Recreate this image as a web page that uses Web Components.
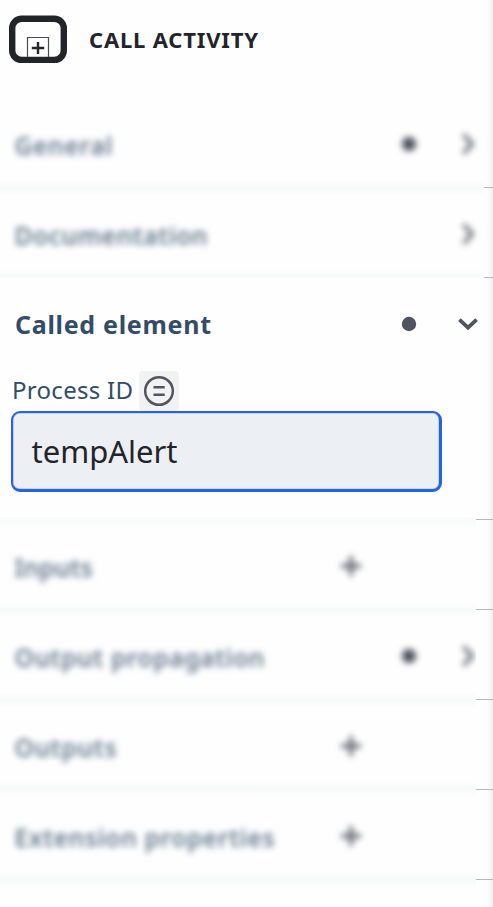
<!DOCTYPE html>
<html lang="en">
<head>
<meta charset="utf-8">
<title>Call activity</title>
<style>
body{margin:0;background:#fefefe;font-family:"Noto Sans","Open Sans",sans-serif;overflow:hidden}
</style>
</head>
<body>
<properties-panel></properties-panel>
<script>
const define = (name, html, setup) => customElements.define(name, class extends HTMLElement {
  connectedCallback() {
    if (this.shadowRoot) return;
    this.attachShadow({mode: 'open'}).innerHTML = html;
    if (setup) setup(this, this.shadowRoot);
  }
});

// Text spaced so that its line has the width given in the "width" attribute.
define('spaced-label', `<style>:host{display:block;white-space:nowrap;line-height:32px}span{display:inline-block}</style><span></span>`, (el, root) => {
  const span = root.querySelector('span');
  span.textContent = el.getAttribute('text');
  const gap = (Number(el.getAttribute('width')) - span.getBoundingClientRect().width) / (span.textContent.length - 1);
  span.style.letterSpacing = gap.toFixed(3) + 'px';
});

const shapes = {
  dot: '<circle cx="12" cy="12" r="7.2" fill="#50545f"/>',
  right: '<path d="M7.5 2.5 16 12 7.5 21.5" fill="none" stroke="#50545f" stroke-width="4"/>',
  down: '<path d="M3.4 7.7 12 15.7 20.6 7.7" fill="none" stroke="#50545f" stroke-width="3.8"/>',
  plus: '<path d="M12 2v20M2 12h20" fill="none" stroke="#50545f" stroke-width="3.8"/>'
};
define('panel-icon', `<style>:host{display:block;width:24px;height:24px}svg{display:block;overflow:visible}</style><svg width="24" height="24" viewBox="0 0 24 24"></svg>`, (el, root) => {
  root.querySelector('svg').innerHTML = shapes[el.getAttribute('kind')];
});

define('panel-header', `<style>
:host{display:flex;align-items:flex-start;height:98px;box-sizing:border-box;padding:15px 0 0 8px;gap:21px;color:#22242a}
svg{display:block}spaced-label{font-size:22px;font-weight:700;padding-top:8px}
</style>
<svg width="60" height="49" viewBox="0 0 60 49"><rect x="4.2" y="3.7" width="51.6" height="41.2" rx="9.5" fill="#fefefe" stroke="#22242a" stroke-width="6.4"/><path d="M19.5 42V22.5h21V42" fill="none" stroke="#4b4b52" stroke-width="1.2"/><path d="M30 27v12M23.8 33h12.4" stroke="#22242a" stroke-width="2.4"/></svg>
<spaced-label text="CALL ACTIVITY" width="169"></spaced-label>`);

define('collapsed-group', `<style>
:host{display:grid;grid-template-columns:var(--body,476px) 1fr;height:90px}
.body{overflow:hidden;background:linear-gradient(#f8f9f9,#fefefe) 0 0/100% 8px no-repeat,linear-gradient(#fefefe,#f8f9f9) 0 100%/100% 9px no-repeat}
:host([first]) .body{background:linear-gradient(#fefefe,#f8f9f9) 0 100%/100% 9px no-repeat}
.line{display:grid;grid-template-columns:324px 58px 59px 24px;padding:27px 0 0 14.5px;align-items:start;filter:blur(3px)}
.line>*{min-width:0}
spaced-label{font-size:24.5px;font-weight:600;color:#334d68;opacity:.75;padding-top:5px}
panel-icon{margin-top:7px}.add{opacity:.9}.arrow{opacity:.85}
.edge{border-bottom:1px solid #b8b6c1}
</style><div class="body"><div class="line"><spaced-label></spaced-label><div class="add"></div><div class="dot"></div><div class="arrow"></div></div></div><div class="edge"></div>`, (el, root) => {
  const label = document.createElement('spaced-label');
  label.setAttribute('text', el.getAttribute('label'));
  label.setAttribute('width', el.getAttribute('width'));
  root.querySelector('spaced-label').replaceWith(label);
  for (const [slot, kind] of [['add','plus'],['dot','dot'],['arrow','right']])
    if (el.hasAttribute(slot)) root.querySelector('.' + slot).innerHTML = `<panel-icon kind="${kind}"></panel-icon>`;
});

define('feel-button', `<style>:host{display:grid;place-items:center;width:40px;height:40px;border-radius:4px;background:#f1f2f4}svg{display:block}</style>
<svg width="32" height="32" viewBox="0 0 32 32" fill="none" stroke="#50545f"><circle cx="16" cy="16" r="13.8" stroke-width="2.5"/><path d="M10.5 12.2h11.2M10.5 19.8h11.2" stroke-width="2.4"/></svg>`);

define('text-field', `<style>
:host{display:block;width:431px;height:81px;box-sizing:border-box;border:solid #2563e5;border-width:2px 3px 3px 2px;border-radius:9px;background:#ecf0f5;box-shadow:inset 0 0 0 .6px #9db9f2;padding:22px 0 0 18.5px;color:#22242a;font-size:31px}
</style><spaced-label text="tempAlert" width="146"></spaced-label>`);

define('called-element', `<style>
:host{display:grid;grid-template-rows:93px 40px 81px;height:239px;padding:0 0 0 11px;box-sizing:border-box}
.title{display:grid;grid-template-columns:382px 58.5px 24px;align-items:start;padding:30px 0 0 4px;font-size:25px;font-weight:700;color:#334d68}
.title panel-icon{margin-top:4px}
.field{display:flex;color:#334d68;font-size:24px}
.field spaced-label{width:127px;padding:3px 0 0 1px}
</style>
<div class="title"><spaced-label text="Called element" width="196"></spaced-label><panel-icon kind="dot"></panel-icon><panel-icon kind="down"></panel-icon></div>
<div class="field"><spaced-label text="Process ID" width="121"></spaced-label><feel-button></feel-button></div>
<text-field></text-field>`);

define('properties-panel', `<style>
:host{display:block;width:493px;height:907px;overflow:hidden;background:linear-gradient(90deg,#fefefe 483px,#fcfcfc 488px,#efeff0)}
.top{--body:484px}
.start{display:grid;grid-template-columns:476px 1fr;height:3px}
.start div{background:#f8f9f9}.start span{margin-top:2px;height:1px;background:#b8b6c1}
.tail{width:476px;height:27px;background:linear-gradient(#f8f9f9,#fefefe) 0 0/100% 8px no-repeat}
</style>
<panel-header></panel-header>
<collapsed-group class="top" first label="General" width="98" dot arrow></collapsed-group>
<collapsed-group class="top" label="Documentation" width="193" arrow></collapsed-group>
<called-element></called-element>
<div class="start"><div></div><span></span></div>
<collapsed-group label="Inputs" width="78" add></collapsed-group>
<collapsed-group label="Output propagation" width="250" dot arrow></collapsed-group>
<collapsed-group label="Outputs" width="102" add></collapsed-group>
<collapsed-group label="Extension properties" width="260" add></collapsed-group>
<div class="tail"></div>`);
</script>
</body>
</html>
